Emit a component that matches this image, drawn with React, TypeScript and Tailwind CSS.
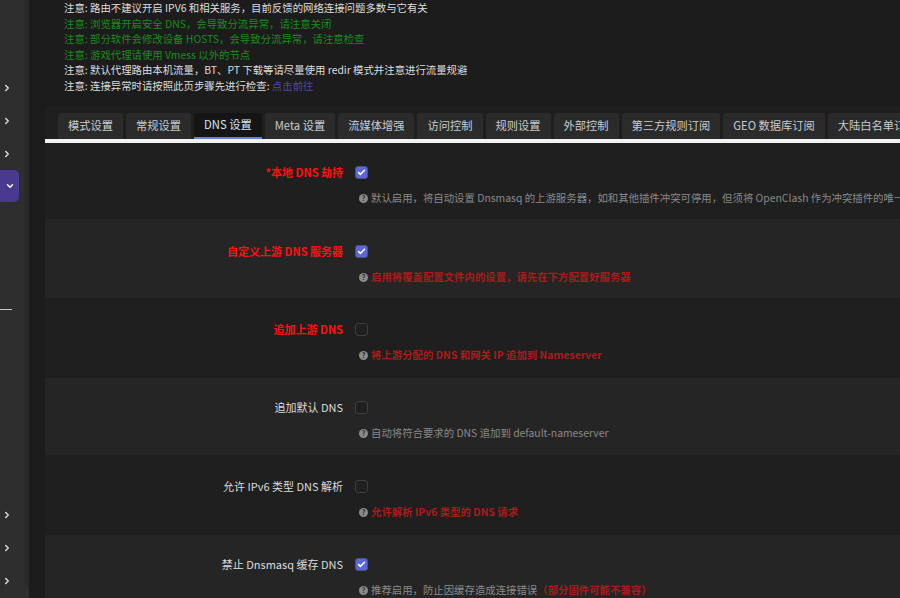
import React from "react";
import { ChevronRight, ChevronDown, Check } from "lucide-react";

const notes: { text: React.ReactNode; cls: string }[] = [
  { text: "注意: 路由不建议开启 IPV6 和相关服务，目前反馈的网络连接问题多数与它有关", cls: "text-[#dedede]" },
  { text: "注意: 浏览器开启安全 DNS，会导致分流异常，请注意关闭", cls: "text-[#1b8c1b]" },
  { text: "注意: 部分软件会修改设备 HOSTS，会导致分流异常，请注意检查", cls: "text-[#1b8c1b]" },
  { text: "注意: 游戏代理请使用 Vmess 以外的节点", cls: "text-[#1b8c1b]" },
  { text: "注意: 默认代理路由本机流量，BT、PT 下载等请尽量使用 redir 模式并注意进行流量规避", cls: "text-[#dedede]" },
  {
    text: (
      <>
        注意: 连接异常时请按照此页步骤先进行检查: <span className="text-[#5246ad]">点击前往</span>
      </>
    ),
    cls: "text-[#dedede]",
  },
];

const tabs = ["模式设置", "常规设置", "DNS 设置", "Meta 设置", "流媒体增强", "访问控制", "规则设置", "外部控制", "第三方规则订阅", "GEO 数据库订阅", "大陆白名单订阅"];

type Row = {
  label: string;
  red: boolean;
  checked: boolean;
  h: string;
  pt: string;
  desc: React.ReactNode;
  bg: string;
};

const rows: Row[] = [
  {
    label: "*本地 DNS 劫持",
    red: true,
    checked: true,
    h: "h-[76px]",
    pt: "pt-[23px]",
    bg: "bg-[#1f1f1f]",
    desc: <span className="text-[#8a8a8a]">默认启用，将自动设置 Dnsmasq 的上游服务器，如和其他插件冲突可停用，但须将 OpenClash 作为冲突插件的唯一上游服务器</span>,
  },
  {
    label: "自定义上游 DNS 服务器",
    red: true,
    checked: true,
    h: "h-[79px]",
    pt: "pt-[26px]",
    bg: "bg-[#252525]",
    desc: <span className="text-[#a81c1c] font-bold">启用将覆盖配置文件内的设置，请先在下方配置好服务器</span>,
  },
  {
    label: "追加上游 DNS",
    red: true,
    checked: false,
    h: "h-[80px]",
    pt: "pt-[25px]",
    bg: "bg-[#1f1f1f]",
    desc: <span className="text-[#a81c1c] font-bold">将上游分配的 DNS 和网关 IP 追加到 Nameserver</span>,
  },
  {
    label: "追加默认 DNS",
    red: false,
    checked: false,
    h: "h-[77px]",
    pt: "pt-[23px]",
    bg: "bg-[#252525]",
    desc: <span className="text-[#8a8a8a]">自动将符合要求的 DNS 追加到 default-nameserver</span>,
  },
  {
    label: "允许 IPv6 类型 DNS 解析",
    red: false,
    checked: false,
    h: "h-[80px]",
    pt: "pt-[25px]",
    bg: "bg-[#1f1f1f]",
    desc: <span className="text-[#a81c1c] font-bold">允许解析 IPv6 类型的 DNS 请求</span>,
  },
  {
    label: "禁止 Dnsmasq 缓存 DNS",
    red: false,
    checked: true,
    h: "h-[80px]",
    pt: "pt-[23px]",
    bg: "bg-[#252525]",
    desc: (
      <>
        <span className="text-[#8a8a8a]">推荐启用，防止因缓存造成连接错误</span>
        <span className="text-[#a81c1c] font-bold">（部分固件可能不兼容）</span>
      </>
    ),
  },
];

function SideChevron() {
  return (
    <div className="h-[33px] flex items-center pl-[2px]">
      <ChevronRight size={10} strokeWidth={3.5} className="text-[#d8dde6]" />
    </div>
  );
}

function Checkbox({ checked }: { checked: boolean }) {
  return checked ? (
    <div className="w-[13px] h-[13px] rounded-[3px] bg-[#5d68d6] border border-[#4a4f90] flex items-center justify-center">
      <Check size={9} strokeWidth={4} className="text-white" />
    </div>
  ) : (
    <div className="w-[13px] h-[13px] rounded-[3px] bg-[#202020] border border-[#3e3e3e]" />
  );
}

export default function App() {
  return (
    <div className="w-[900px] h-[598px] overflow-hidden flex bg-[#1c1c1c] font-['Noto_Sans_CJK_SC','Liberation_Sans',sans-serif]">
      {/* sidebar */}
      <div className="w-[29px] shrink-0 flex bg-[#2e2e2e]">
        <div className="w-[25px] flex flex-col pt-[71px]">
          <SideChevron />
          <SideChevron />
          <SideChevron />
          <div className="h-[32px] w-[19px] bg-[#4a3a8f] rounded-r-[5px] flex items-center justify-center">
            <ChevronDown size={10} strokeWidth={3.5} className="text-white" />
          </div>
          <div className="mt-[107px] h-[1px] w-[12px] bg-[#c8c8c8]" />
          <div className="mt-[188px] flex flex-col">
            <SideChevron />
            <SideChevron />
            <SideChevron />
          </div>
        </div>
        <div className="w-[4px] h-[587px] bg-[#2a2a2a]" />
      </div>

      {/* main */}
      <div className="flex-1 min-w-0 flex flex-col">
        <div className="pl-[35px] text-[10.4px] leading-[15.6px] whitespace-nowrap">
          {notes.map((n, i) => (
            <div key={i} className={n.cls}>
              {n.text}
            </div>
          ))}
        </div>

        <div className="ml-[16px] mt-[12px] flex-1 bg-[#1f1f1f] rounded-tl-[6px] flex flex-col">
          <div className="pt-[7px] pl-[13px] flex gap-[3px] whitespace-nowrap overflow-hidden">
            {tabs.map((t, i) =>
              i === 2 ? (
                <div
                  key={t}
                  className="shrink-0 h-[26px] px-[10px] flex items-center bg-[#151515] text-[#d6e6f6] text-[11.25px] leading-none rounded-t-[3px] border-b-2 border-[#6a7de0]"
                >
                  {t}
                </div>
              ) : (
                <div
                  key={t}
                  className="shrink-0 h-[26px] px-[10px] flex items-center bg-[#2b2b2b] text-[#c8ccd2] text-[11.25px] leading-none rounded-t-[3px]"
                >
                  {t}
                </div>
              )
            )}
          </div>
          <div className="h-[4px] bg-[#f2f2f2]" />

          {rows.map((r) => (
            <div key={r.label} className={`${r.h} ${r.pt} ${r.bg} shrink-0 flex flex-col whitespace-nowrap overflow-hidden`}>
              <div className="flex items-center h-[14px]">
                <div
                  className={`w-[298px] shrink-0 text-right text-[11px] leading-none ${r.red ? "text-[#ff1010] font-bold" : "text-[#dcdcdc]"}`}
                >
                  {r.label}
                </div>
                <div className="ml-[12px]">
                  <Checkbox checked={r.checked} />
                </div>
              </div>
              <div className="flex items-center h-[14px] mt-[12px] pl-[314px] text-[10.4px] leading-none">
                <span className="w-[9px] h-[9px] rounded-full bg-[#8a8a8a] text-[#222] text-[7px] font-bold leading-none flex items-center justify-center mr-[3px] shrink-0">
                  ?
                </span>
                {r.desc}
              </div>
            </div>
          ))}
        </div>
      </div>
    </div>
  );
}
